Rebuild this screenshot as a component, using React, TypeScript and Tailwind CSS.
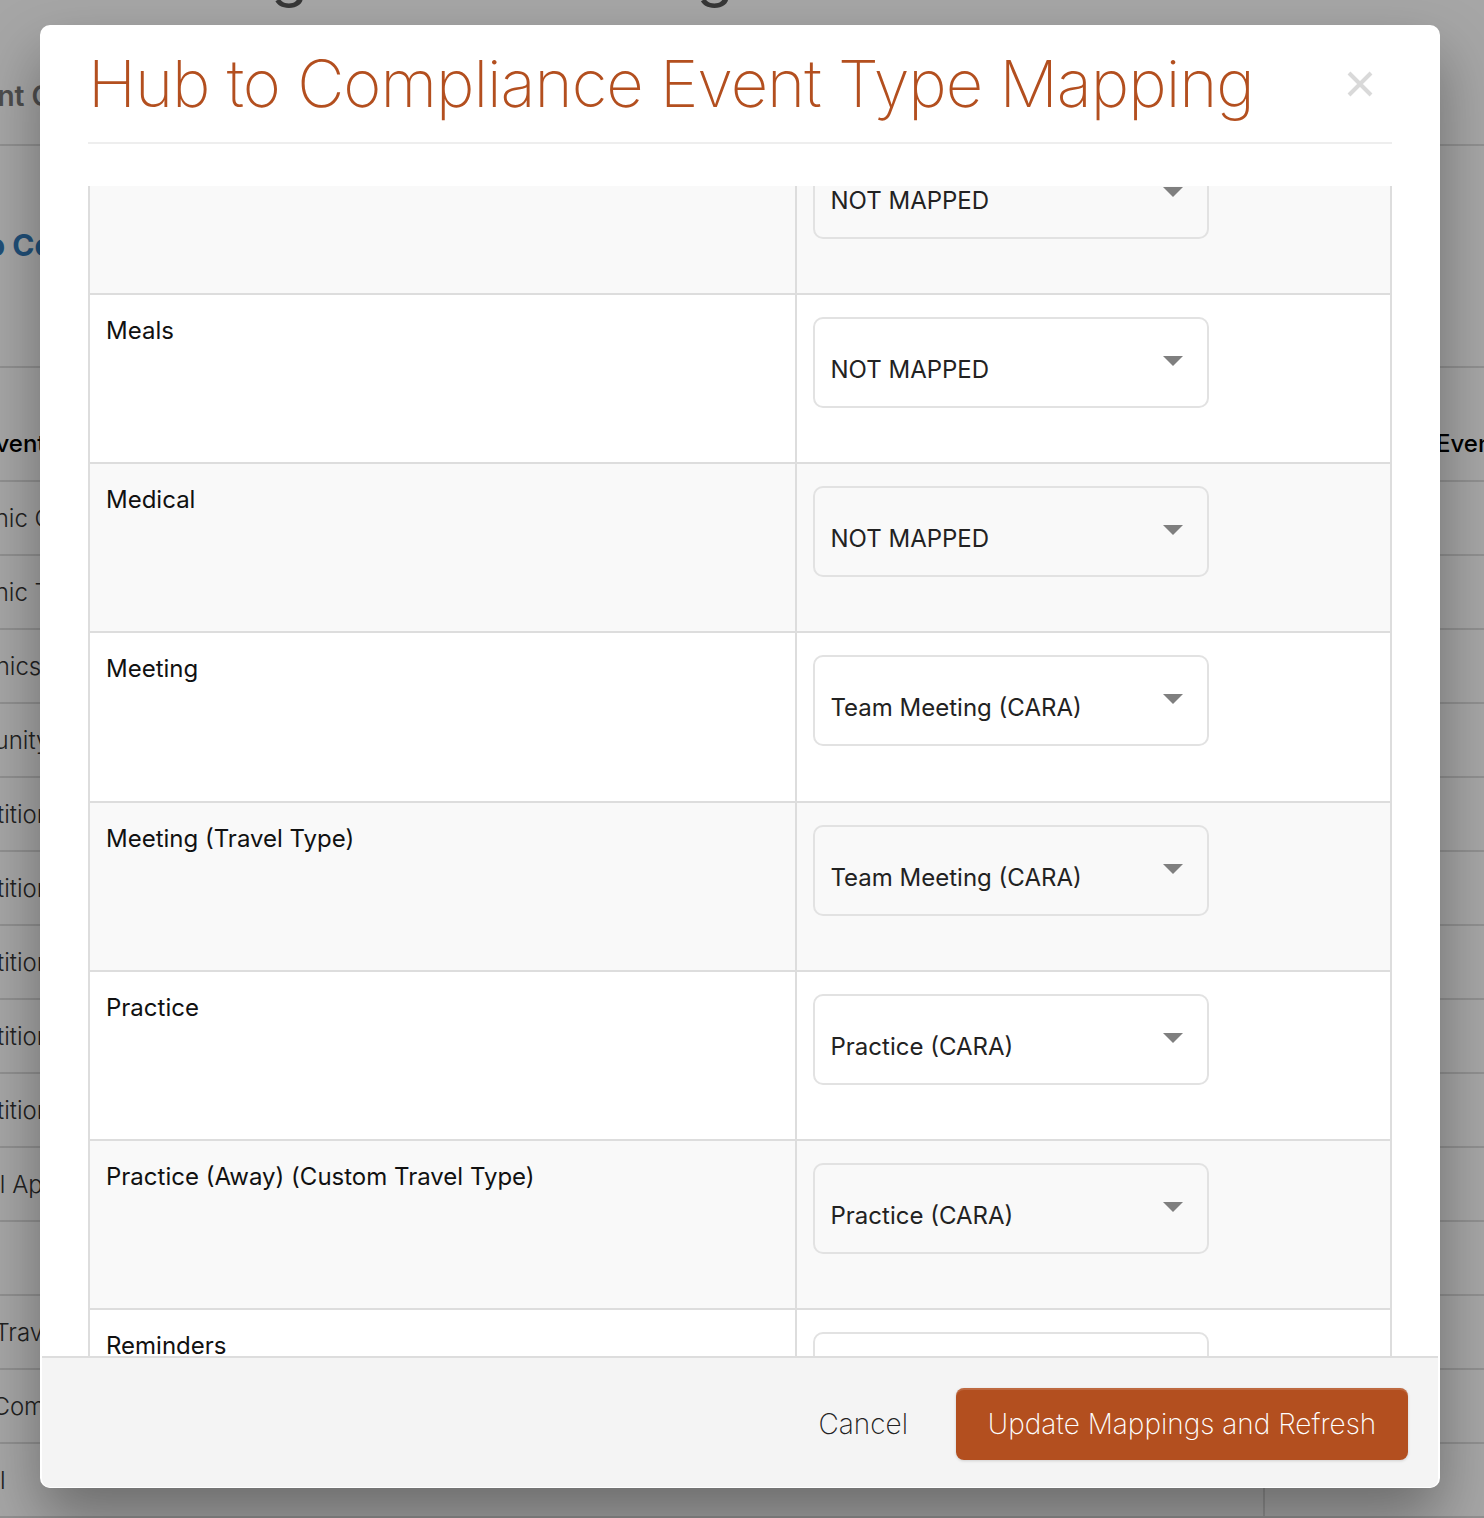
const rows = [
  { label: "", value: "NOT MAPPED", bg: "bg-[#f9f9f9]", h: "h-[169px]" },
  { label: "Meals", value: "NOT MAPPED", bg: "bg-white", h: "h-[169px]" },
  { label: "Medical", value: "NOT MAPPED", bg: "bg-[#f9f9f9]", h: "h-[169px]" },
  { label: "Meeting", value: "Team Meeting (CARA)", bg: "bg-white", h: "h-[170px]" },
  { label: "Meeting (Travel Type)", value: "Team Meeting (CARA)", bg: "bg-[#f9f9f9]", h: "h-[169px]" },
  { label: "Practice", value: "Practice (CARA)", bg: "bg-white", h: "h-[169px]" },
  { label: "Practice (Away) (Custom Travel Type)", value: "Practice (CARA)", bg: "bg-[#f9f9f9]", h: "h-[169px]" },
  { label: "Reminders", value: "", bg: "bg-white", h: "h-[169px]" },
];

const pageRows = [
  { text: "Clinic Check", ml: "-ml-[34px]" },
  { text: "Clinic Travel", ml: "-ml-[34px]" },
  { text: "Clinics", ml: "-ml-[33px]" },
  { text: "Community", ml: "-ml-[79px]" },
  { text: "Competition", ml: "-ml-[84px]" },
  { text: "Competition", ml: "-ml-[84px]" },
  { text: "Competition", ml: "-ml-[84px]" },
  { text: "Competition", ml: "-ml-[84px]" },
  { text: "Competition", ml: "-ml-[84px]" },
  { text: "Official Apps", ml: "-ml-[72px]" },
  { text: "", ml: "" },
  { text: "Team Travel", ml: "-ml-[74px]" },
  { text: "Team Competition", ml: "-ml-[76px]" },
  { text: "Travel", ml: "-ml-[62px]" },
];

function Row({ label, value, bg, h }: { label: string; value: string; bg: string; h: string }) {
  return (
    <div className={`grid grid-cols-[705px_1fr] border-b-2 border-[#dddddd] ${bg} ${h}`}>
      <div className="pl-[16px] pt-[20px] text-[24px] leading-[32px] text-[#111111]">{label}</div>
      <div className="border-l-2 border-[#dddddd] pl-[16px] pt-[22px]">
        <div className="relative h-[91px] w-[396px] rounded-[10px] border-2 border-[#e2e2e2] pl-[15.5px] pt-[35px] text-[24px] leading-[32px] text-[#222222]">
          {value}
          <span className="absolute right-[24px] top-[37px] h-0 w-0 border-x-[10px] border-t-[10px] border-x-transparent border-t-[#7f7f7f]" />
        </div>
      </div>
    </div>
  );
}

export default function App() {
  return (
    <div className="relative h-[1518px] w-full overflow-hidden bg-white font-[Inter,sans-serif]">
      {/* page behind the dialog */}
      <div className="flex h-[146px] flex-col border-b-2 border-[#dddddd]">
        <div className="-mt-[63px] ml-[114px] whitespace-nowrap text-[60px] leading-[72px] text-[#555555]">
          Manage Event Settings
        </div>
        <div className="-ml-[52px] mt-[69px] whitespace-nowrap text-[28px] font-semibold leading-[36px] text-[#777777]">
          Event Config
        </div>
      </div>
      <div className="flex h-[222px] items-start border-b-2 border-[#dddddd] pt-[80px]">
        <div className="-ml-[91px] whitespace-nowrap text-[30px] font-bold leading-[38px] text-[#327ab8]">
          Hub to Compliance
        </div>
      </div>
      <div className="flex h-[114px] items-start justify-between border-b-2 border-[#dddddd] pt-[59px] text-[24px] font-medium leading-[34px] text-black">
        <span className="-ml-[19px]">Event Name</span>
        <span className="w-[48px] overflow-hidden whitespace-nowrap">Event</span>
      </div>
      {pageRows.map((row, i) => (
        <div key={i} className="grid h-[74px] grid-cols-[1265px_1fr] border-b-2 border-[#dddddd]">
          <div className="overflow-hidden border-r-2 border-[#dddddd]">
            <div className={`whitespace-nowrap pt-[21px] text-[24px] font-light leading-[32px] text-[#333333] ${row.ml}`}>
              {row.text}
            </div>
          </div>
          <div />
        </div>
      ))}

      {/* backdrop */}
      <div className="absolute inset-0 bg-black/35" />

      {/* dialog */}
      <div className="absolute left-[40px] top-[25px] flex h-[1463px] w-[1400px] flex-col rounded-[10px] border-2 border-b border-white bg-white shadow-[0_30px_60px_rgba(0,0,0,0.35)]">
        <div className="mx-[46px] flex h-[117px] shrink-0 items-start justify-between border-b-2 border-[#eeeeee]">
          <h1 className="mt-[11px] whitespace-nowrap text-[65px] font-[200] leading-[92px] tracking-[-1px] text-[#b34f1f]">
            Hub to Compliance Event Type Mapping
          </h1>
          <svg className="mr-[19px] mt-[44px]" width="26" height="26" viewBox="0 0 26 26" fill="none">
            <path d="M2 2 L24 24 M24 2 L2 24" stroke="#d9d9d9" strokeWidth="4" />
          </svg>
        </div>
        <div className="mx-[46px] mt-[42px] min-h-0 flex-1 overflow-hidden border-x-2 border-[#dddddd]">
          <div className="-mt-[60px]">
            {rows.map((row, i) => (
              <Row key={i} {...row} />
            ))}
          </div>
        </div>
        <div className="flex h-[131px] shrink-0 items-start justify-end rounded-b-[8px] border-t-2 border-[#dddddd] bg-[#f4f4f4] pr-[30px] pt-[30px]">
          <button className="mr-[48px] mt-[16px] text-[28px] font-[200] leading-[40px] text-[#222222]">Cancel</button>
          <button className="h-[72px] w-[452px] rounded-[8px] bg-[#b34f1f] text-[28px] font-[200] leading-[40px] text-white shadow-[inset_0_2px_0_rgba(255,255,255,0.15),0_1px_3px_rgba(0,0,0,0.15)]">
            Update Mappings and Refresh
          </button>
        </div>
      </div>
    </div>
  );
}
